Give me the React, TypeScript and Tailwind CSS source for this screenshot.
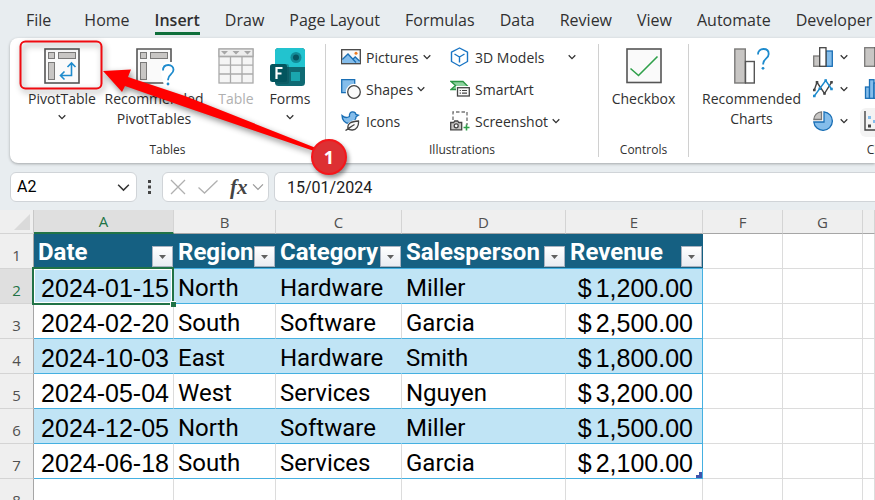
import React from "react";

const tabs = ["File", "Home", "Insert", "Draw", "Page Layout", "Formulas", "Data", "Review", "View", "Automate", "Developer"];

const rows = [
  ["2024-01-15", "North", "Hardware", "Miller", "1,200.00"],
  ["2024-02-20", "South", "Software", "Garcia", "2,500.00"],
  ["2024-10-03", "East", "Hardware", "Smith", "1,800.00"],
  ["2024-05-04", "West", "Services", "Nguyen", "3,200.00"],
  ["2024-12-05", "North", "Software", "Miller", "1,500.00"],
  ["2024-06-18", "South", "Services", "Garcia", "2,100.00"],
];

function Chevron({ size = 8, color = "#333333", width = 1.3 }: { size?: number; color?: string; width?: number }) {
  return (
    <svg width={size} height={size} viewBox="0 0 8 8" fill="none" stroke={color} strokeWidth={width} className="shrink-0">
      <path d="M0.7 2.3 4 5.6 7.3 2.3" />
    </svg>
  );
}

function PivotIcon() {
  return (
    <svg width="36" height="36" viewBox="0 0 36 36" fill="none">
      <rect x="1" y="1" width="34" height="34" fill="#fafafa" stroke="#555" strokeWidth="1.6" />
      <g fill="#c8c6c4" stroke="#7a7978">
        <rect x="4.500" y="4.500" width="6" height="6" />
        <rect x="14.500" y="4.500" width="17" height="6" />
        <rect x="4.500" y="14.500" width="6" height="17" />
      </g>
      <path d="M27.500 15.500V27.500H17M23.500 19l4-4 4 4M20.500 23.500l-4 4 4 4" stroke="#1e8bcd" strokeWidth="1.6" />
    </svg>
  );
}

function RecommendedPivotIcon() {
  return (
    <svg width="36" height="38" viewBox="0 0 36 38" fill="none" className="overflow-visible">
      <rect x="1" y="1" width="34" height="34" fill="#fafafa" />
      <path d="M35 14V1H1v34h27" stroke="#555" strokeWidth="1.6" />
      <g fill="#c8c6c4" stroke="#7a7978">
        <rect x="4.500" y="4.500" width="6" height="6" />
        <rect x="14.500" y="4.500" width="17" height="6" />
        <rect x="4.500" y="14.500" width="6" height="17" />
      </g>
      <path d="M25 25v-5l4-6h8l3 6-4 8-2 10h-6z" fill="#fff" />
      <path d="M27 22.500c0-3.500 2.200-5.500 5.300-5.500s5.200 2 5.200 4.800c0 4.600-5.400 4.700-5.400 9.500v1" stroke="#1e8bcd" strokeWidth="1.8" />
      <circle cx="32" cy="36" r="1.400" fill="#1e8bcd" />
    </svg>
  );
}

function TableIcon() {
  return (
    <svg width="36" height="36" viewBox="0 0 36 36" fill="none" stroke="#aaa" strokeWidth="1.300">
      <rect x="1" y="1" width="34" height="34" fill="#f5f5f5" />
      <rect x="1" y="1" width="34" height="7.500" fill="#ededed" />
      <path d="M1 8.500h34M1 17.200h34M1 26h34M12.500 8.500V35M24 8.500V35" />
      <path d="M3 3h7L6.500 6.500zM14.500 3h7L18 6.500zM26 3h7l-3.500 3.500z" fill="#a6a6a6" stroke="none" />
    </svg>
  );
}

function FormsIcon() {
  return (
    <svg width="40" height="38" viewBox="0 0 40 38">
      <rect x="5" y="0" width="30" height="38" rx="3.500" fill="#0f6a73" />
      <path d="M5 19V3.500A3.500 3.500 0 0 1 8.500 0h23A3.500 3.500 0 0 1 35 3.500V19z" fill="#22c3cf" />
      <circle cx="26" cy="9.500" r="5.500" fill="#128c99" />
      <circle cx="26" cy="9.500" r="3" fill="#075562" />
      <rect x="21" y="24" width="9" height="9" fill="#1aa6ae" />
      <rect x="5" y="16" width="14" height="20" rx="2" fill="#0a4a52" opacity="0.400" />
      <rect x="0" y="16" width="17" height="18" rx="2.500" fill="#03555e" />
      <path d="M6.500 31V20h6M6.500 25.500h5" stroke="#fff" strokeWidth="2.200" fill="none" />
    </svg>
  );
}

function PicturesIcon() {
  return (
    <svg width="20" height="20" viewBox="0 0 20 20" fill="none">
      <rect x="0.700" y="2.700" width="18.600" height="14" fill="#fafafa" stroke="#444" strokeWidth="1.300" />
      <path d="M1.300 12.500 7 7l5 5 2-2 5 4.500v1.600H1.300z" fill="#84bdeb" />
      <path d="M1.300 12.500 7 7l8 8.500M12 12l2.200-2 4.500 4.300" stroke="#1a6fb5" strokeWidth="1.300" />
      <circle cx="15" cy="6.200" r="1.500" fill="#ef7d21" />
    </svg>
  );
}

function ShapesIcon() {
  return (
    <svg width="20" height="20" viewBox="0 0 20 20" fill="none">
      <path d="M0.700 0.700h13v13h-13z" fill="#84bdeb" stroke="#1a6fb5" strokeWidth="1.300" />
      <circle cx="13" cy="13" r="8.200" fill="#fff" />
      <circle cx="13" cy="13" r="6.300" fill="#fafafa" stroke="#444" strokeWidth="1.300" />
    </svg>
  );
}

function IconsIcon() {
  return (
    <svg width="20" height="20" viewBox="0 0 20 20" fill="none">
      <path d="M1 4.500C3 6.500 6 7 8.500 5.500 8 2.500 9.500 .8 11.700 .8c1.800 0 3 1 3.200 2.600l2.500.8-2.300 1.600C15 9 12 12.500 8 12.500 4 12.500 1 9 1 4.500z" fill="#84bdeb" stroke="#1a6fb5" strokeWidth="1.300" />
      <path d="M5 20c-1-6 3-12 15-11.500V20z" fill="#fff" />
      <path d="M7 17.500C6 12.500 10 10.500 17.500 10c.5 5-2 9.300-6.500 9-1.800-.1-3.200-.6-4-1.500zM4.500 19.500C7 18 10 15.500 13.500 13.500" stroke="#444" strokeWidth="1.300" fill="#fafafa" />
    </svg>
  );
}

function CubeIcon() {
  return (
    <svg width="20" height="20" viewBox="0 0 20 20" fill="none" stroke="#1a75c4" strokeWidth="1.400" strokeLinejoin="round">
      <path d="M9.500 1 17.500 5.200v9.300L9.500 19 1.500 14.500V5.200z" fill="#fff" />
      <path d="M4.500 7l5 3 5-3M9.500 10v5.500" />
    </svg>
  );
}

function SmartArtIcon() {
  return (
    <svg width="20" height="20" viewBox="0 0 20 20" fill="none">
      <path d="M1 2.500h12l4.500 4.500L14 10.500H1l4.500-4z" fill="#8fd3a0" stroke="#2a9444" strokeWidth="1.300" />
      <rect x="6" y="7" width="14" height="10.500" fill="#fff" />
      <rect x="7.500" y="8.700" width="11.800" height="8.300" fill="#fafafa" stroke="#444" strokeWidth="1.300" />
      <path d="M9.700 11.500h1.200M12 11.500h5M9.700 14.200h1.200M12 14.200h5" stroke="#444" strokeWidth="1.200" />
    </svg>
  );
}

function ScreenshotIcon() {
  return (
    <svg width="20" height="20" viewBox="0 0 20 20" fill="none">
      <path d="M3 9V1h14v13" stroke="#777" strokeWidth="1.400" strokeDasharray="3.500 2" />
      <path d="M.7 11.500h3l1-1.500h3l1 1.500h3v7.300H.7z" fill="#c8c6c4" stroke="#444" strokeWidth="1.300" />
      <circle cx="6.200" cy="14.800" r="2" fill="#fff" stroke="#444" strokeWidth="1.300" />
      <path d="M16.500 13.500v6M13.500 16.500h6" stroke="#2fa04a" strokeWidth="1.600" />
    </svg>
  );
}

function CheckboxIcon() {
  return (
    <svg width="36" height="36" viewBox="0 0 36 36" fill="none">
      <rect x="1" y="1" width="34" height="33.500" fill="#fafafa" stroke="#555" strokeWidth="1.600" />
      <path d="M4.500 20.500 12.500 27.500 31.500 8.500" stroke="#2fa04a" strokeWidth="1.600" />
    </svg>
  );
}

function RecommendedChartsIcon() {
  return (
    <svg width="36" height="36" viewBox="0 0 36 36" fill="none">
      <rect x="0.800" y="1" width="10.500" height="34" fill="#c8c6c4" stroke="#7a7978" strokeWidth="1.400" />
      <rect x="11.500" y="13.500" width="8.800" height="21.500" fill="#fff" stroke="#555" strokeWidth="1.400" />
      <path d="M24 6.500C24 3 26.300 1 29.500 1s5.200 2 5.200 5c0 4.700-5.500 4.500-5.500 9.500v1" stroke="#1e8bcd" strokeWidth="1.800" />
      <circle cx="29" cy="20.300" r="1.400" fill="#1e8bcd" />
    </svg>
  );
}

function ColumnChartIcon() {
  return (
    <svg width="20" height="20" viewBox="0 0 20 20" strokeWidth="1.300">
      <rect x="0.700" y="9" width="6" height="10.300" fill="#c8c6c4" stroke="#7a7978" />
      <rect x="13" y="4" width="6.300" height="15.300" fill="#84bdeb" stroke="#1a6fb5" />
      <rect x="6.700" y="0.700" width="6.300" height="18.600" fill="#fff" stroke="#444" />
    </svg>
  );
}

function LineChartIcon() {
  return (
    <svg width="20" height="20" viewBox="0 0 20 20" fill="none" strokeWidth="1.400">
      <path d="M1.300 11 4 3.300 11.500 14.500 18.500 3.300" stroke="#444" />
      <path d="M1.300 17 12.700 1.500 18.500 10" stroke="#1e8bcd" />
      <path d="M0 9.700h2.600v2.600H0zM2.700 2h2.600v2.600H2.700zM10.200 13.200h2.600v2.600h-2.600zM17.200 2h2.600v2.600h-2.600z" fill="#444" />
      <path d="M0 15.700h2.600v2.600H0zM11.400 .2H14v2.600h-2.600zM17.200 8.700h2.600v2.600h-2.600zM5.500 8.500h2.600v2.600H5.500z" fill="#1e8bcd" />
    </svg>
  );
}

function PieChartIcon() {
  return (
    <svg width="20" height="20" viewBox="0 0 20 20" strokeWidth="1.300">
      <path d="M8.500.8A8 8 0 0 0 .8 8.500h7.700z" fill="#c8c6c4" stroke="#7a7978" />
      <path d="M11 .8V11H.8A9.300 9.300 0 1 0 11 .8z" fill="#84bdeb" stroke="#1a6fb5" />
    </svg>
  );
}

function HierarchyChartIcon() {
  return (
    <svg width="20" height="20" viewBox="0 0 20 20" strokeWidth="1.300">
      <rect x="0.700" y="0.700" width="10.500" height="18.600" fill="#c8c6c4" stroke="#7a7978" />
      <rect x="11.200" y="0.700" width="8" height="18.600" fill="#fff" stroke="#444" />
    </svg>
  );
}

function HistogramIcon() {
  return (
    <svg width="20" height="20" viewBox="0 0 20 20" strokeWidth="1.300" fill="#84bdeb" stroke="#1a6fb5">
      <rect x="1.500" y="8" width="4" height="11.300" />
      <rect x="5.500" y="0.700" width="4.500" height="18.600" />
      <rect x="10" y="4" width="4.500" height="15.300" />
    </svg>
  );
}

function ScatterIcon() {
  return (
    <svg width="20" height="20" viewBox="0 0 20 20">
      <path d="M1 0v19h19" stroke="#444" strokeWidth="1.400" fill="none" />
      <path d="M4 5h3v3H4zM9 9h3v3H9z" fill="#84bdeb" />
      <path d="M4 13.500h3v3H4zM13 13.500h3v3h-3z" fill="#444" />
    </svg>
  );
}

function Group({ label, className, children }: { label: string; className: string; children: React.ReactNode }) {
  return (
    <section aria-label={label} className={`flex shrink-0 flex-col border-[#d0d0d0] ${className}`}>
      <div className="flex h-[99px] shrink-0">{children}</div>
      <div className="text-center text-[12px] leading-[14px] text-[#303030]">{label}</div>
    </section>
  );
}

function BigButton({ icon, lines, className, chevron, disabled }: { icon: React.ReactNode; lines: string[]; className: string; chevron?: boolean; disabled?: boolean }) {
  return (
    <button disabled={disabled} className={`flex shrink-0 flex-col items-center pt-1 disabled:text-[#b0b0b0] ${className}`}>
      <span className="flex h-[41px] items-start">{icon}</span>
      {lines.map((l) => (
        <span key={l} className="whitespace-nowrap leading-5">{l}</span>
      ))}
      {chevron && <span className="pt-1"><Chevron /></span>}
    </button>
  );
}

function SmallButton({ icon, label, chevron, wide }: { icon: React.ReactNode; label: string; chevron?: boolean; wide?: boolean }) {
  return (
    <button className="flex h-8 items-center gap-1 whitespace-nowrap pb-[6px]">
      {icon}
      <span className="pl-px">{label}</span>
      {chevron && <span className={wide ? "pl-5" : ""}><Chevron /></span>}
    </button>
  );
}

function ChartButton({ label, icon }: { label: string; icon: React.ReactNode }) {
  return (
    <button aria-label={label} className="flex h-8 items-center gap-[7px] pb-[6px]">
      {icon}
      <Chevron />
    </button>
  );
}

function FilterHeader({ label }: { label: string }) {
  return (
    <th scope="col" className="border-b border-[#45b0e1] bg-[#156082] p-0 text-left text-[24px] font-bold text-white">
      <div className="flex h-[34px] items-end pr-px pl-1">
        <span className="w-0 flex-1 whitespace-nowrap leading-8">{label}</span>
        <button aria-label={`Filter ${label}`} className="mb-px flex size-[21px] shrink-0 items-center justify-center border border-[#a9b2c0] bg-linear-to-b from-white to-[#e9ecf2]">
          <svg width="7" height="4" viewBox="0 0 7 4" fill="#606060"><path d="M0 0h7L3.500 4z" /></svg>
        </button>
      </div>
    </th>
  );
}

function RowNumber({ n, active }: { n: number; active?: boolean }) {
  return (
    <th scope="row" className={`h-[35px] border-r border-b border-r-[#a6a6a6] border-b-[#d4d4d4] p-0 pt-2 font-[Open_Sans,sans-serif] text-[15px] font-normal ${active ? "bg-[#dfdfdf] text-[#217346]" : "bg-[#efefef] text-[#505050]"}`}>
      {n}
    </th>
  );
}

function EmptyCells({ count }: { count: number }) {
  return (
    <>
      {Array.from({ length: count }, (_, i) => (
        <td key={i} className="border-r border-b border-[#dcdcdc]" />
      ))}
    </>
  );
}

export default function App() {
  return (
    <div className="relative flex h-screen flex-col overflow-hidden bg-[#e8edf0] font-[Open_Sans,sans-serif] text-[14px] text-[#303030]">
      <nav className="flex h-[38px] shrink-0 gap-[25px] overflow-hidden pl-[26px] text-[16px]">
        {tabs.map((t) => (
          <button key={t} className={`flex h-[35px] shrink-0 flex-col whitespace-nowrap pt-2 leading-6 first:mr-2 ${t === "Insert" ? "border-b-3 border-[#0f703b] font-semibold" : ""}`}>
            {t}
          </button>
        ))}
      </nav>

      <div className="ml-[10px] flex h-[125px] shrink-0 overflow-hidden rounded-l-lg bg-white py-[6px] shadow-[0_1px_3px_rgba(0,0,0,0.3)]">
        <Group label="Tables" className="w-[316px] border-r">
          <div className="flex pl-[10px]">
            <BigButton icon={<PivotIcon />} lines={["PivotTable"]} className="w-[84px]" chevron />
            <BigButton icon={<RecommendedPivotIcon />} lines={["Recommended", "PivotTables"]} className="w-[100px]" />
            <BigButton icon={<TableIcon />} lines={["Table"]} className="w-16" disabled />
            <BigButton icon={<FormsIcon />} lines={["Forms"]} className="w-11" chevron />
          </div>
        </Group>
        <Group label="Illustrations" className="w-[273px] border-r">
          <div className="w-[124px] pl-[15px]">
            <SmallButton icon={<PicturesIcon />} label="Pictures" chevron />
            <SmallButton icon={<ShapesIcon />} label="Shapes" chevron />
            <SmallButton icon={<IconsIcon />} label="Icons" />
          </div>
          <div>
            <SmallButton icon={<CubeIcon />} label="3D Models" chevron wide />
            <SmallButton icon={<SmartArtIcon />} label="SmartArt" />
            <SmallButton icon={<ScreenshotIcon />} label="Screenshot" chevron />
          </div>
        </Group>
        <Group label="Controls" className="w-[90px] border-r">
          <BigButton icon={<CheckboxIcon />} lines={["Checkbox"]} className="w-full" />
        </Group>
        <Group label="Charts" className="w-[392px]">
          <BigButton icon={<RecommendedChartsIcon />} lines={["Recommended", "Charts"]} className="w-[124px] pl-px" />
          <div>
            <ChartButton label="Column chart" icon={<ColumnChartIcon />} />
            <ChartButton label="Line chart" icon={<LineChartIcon />} />
            <ChartButton label="Pie chart" icon={<PieChartIcon />} />
          </div>
          <div className="pl-3">
            <div className="pl-1"><ChartButton label="Hierarchy chart" icon={<HierarchyChartIcon />} /></div>
            <div className="pl-1"><ChartButton label="Statistic chart" icon={<HistogramIcon />} /></div>
            <div className="h-[29px] rounded-md bg-[#f3f3f3] pl-1"><ChartButton label="Scatter chart" icon={<ScatterIcon />} /></div>
          </div>
        </Group>
      </div>

      <div className="flex h-[47px] shrink-0 items-center pt-px pl-[10px]">
        <div className="flex h-[30px] w-[127px] shrink-0 items-center rounded-md border border-[#d0d4d8] bg-white pr-[6px] pl-[6px]">
          <input aria-label="Name box" defaultValue="A2" className="w-0 flex-1 bg-transparent font-[Roboto,sans-serif] text-[16px] text-black outline-none" />
          <button aria-label="Open name list" className="flex"><Chevron size={13} width={0.9} /></button>
        </div>
        <svg width="25" height="14" viewBox="0 0 25 14" fill="#444" className="shrink-0">
          <path d="M11 0h3v3h-3zM11 5.500h3v3h-3zM11 11h3v3h-3z" />
        </svg>
        <div className="flex h-[30px] w-[107px] shrink-0 items-center rounded-md border border-[#d0d4d8] bg-white pl-[7px]">
          <button aria-label="Cancel" className="mr-3 flex">
            <svg width="16" height="16" viewBox="0 0 16 16" stroke="#b0b0b0" strokeWidth="1.300"><path d="M1 1l14 14M15 1 1 15" /></svg>
          </button>
          <button aria-label="Enter" className="mr-3 flex">
            <svg width="20" height="16" viewBox="0 0 20 16" fill="none" stroke="#b0b0b0" strokeWidth="1.300"><path d="M.5 8.500 6.500 14 19.500 1.500" /></svg>
          </button>
          <button className="mr-1 font-[Liberation_Serif,serif] text-[21px] font-bold italic leading-6 text-[#444]">fx</button>
          <button aria-label="More functions" className="flex"><Chevron size={12} color="#999999" width={0.8} /></button>
        </div>
        <input aria-label="Formula bar" defaultValue="15/01/2024" className="ml-[5px] h-[30px] w-0 flex-1 rounded-l-md border border-r-0 border-[#d0d4d8] bg-white pl-3 font-[Roboto,sans-serif] text-[16px] text-[#202020] outline-none" />
      </div>

      <main className="min-h-0 flex-1 overflow-hidden bg-white">
        <table className="w-full min-w-[863px] table-fixed border-separate border-spacing-0 font-[Roboto,sans-serif] text-[24px] text-black">
          <colgroup>
            <col className="w-[34px]" />
            <col className="w-[140px]" />
            <col className="w-[102px]" />
            <col className="w-[126px]" />
            <col className="w-[164px]" />
            <col className="w-[137px]" />
            <col className="w-[80px]" />
            <col className="w-[80px]" />
            <col />
          </colgroup>
          <thead>
            <tr className="h-6 bg-[#efefef] font-[Open_Sans,sans-serif] text-[15px] text-[#505050]">
              <td className="border-r border-b border-r-[#c8c8c8] border-b-[#d4d4d4] p-0">
                <svg width="30" height="16" viewBox="0 0 30 16" fill="#dadada"><path d="M30 0v16H14z" /></svg>
              </td>
              {["A", "B", "C", "D", "E", "F", "G", ""].map((c, i) => (
                <th key={i} scope="col" className={`border-r border-r-[#d4d4d4] p-0 font-normal leading-5 ${c === "A" ? "border-b-2 border-b-[#217346] bg-[#dfdfdf] text-[#217346]" : "border-b border-b-[#a6a6a6]"}`}>
                  {c}
                </th>
              ))}
            </tr>
            <tr>
              <RowNumber n={1} />
              {["Date", "Region", "Category", "Salesperson", "Revenue"].map((h) => (
                <FilterHeader key={h} label={h} />
              ))}
              <EmptyCells count={3} />
            </tr>
          </thead>
          <tbody>
            {rows.map((r, ri) => {
              const striped = ri % 2 === 0;
              const cell = striped ? "border-r border-b-[#45b0e1] border-r-[#c0e4f5] bg-[#c0e4f5]" : "border-r border-b-[#45b0e1] border-r-[#dcdcdc]";
              return (
                <tr key={ri}>
                  <RowNumber n={ri + 2} active={ri === 0} />
                  {r.slice(0, 4).map((v, ci) => (
                    <td key={ci} className={`border-b p-0 pt-1 leading-[30px] ${ci === 0 ? "pr-1 text-right font-[Liberation_Sans,sans-serif] text-[25px]" : "pl-1"} ${ri === 0 && ci === 0 ? "relative z-10" : ""} ${cell}`}>
                      {v}
                      {ri === 0 && ci === 0 && (
                        <span className="pointer-events-none absolute -inset-y-[2px] -right-px -left-[2px] border-2 border-[#217346] shadow-[inset_0_0_0_1px_white]">
                          <span className="absolute -right-[4px] -bottom-[4px] size-[6px] border-t border-l border-white bg-[#217346]" />
                        </span>
                      )}
                    </td>
                  ))}
                  <td className={`relative border-r border-b border-[#45b0e1] p-0 pt-1 pr-[9px] text-right font-[Liberation_Sans,sans-serif] text-[25px] leading-[30px] ${striped ? "bg-[#c0e4f5]" : ""}`}>
                    <span className="mr-1">$</span>{r[4]}
                    {ri === 5 && (
                      <svg width="6" height="6" viewBox="0 0 6 6" fill="#3f54ac" className="absolute right-0 bottom-0"><path d="M0 3h3V0h3v6H0z" /></svg>
                    )}
                  </td>
                  <EmptyCells count={3} />
                </tr>
              );
            })}
            <tr>
              <RowNumber n={8} />
              <EmptyCells count={8} />
            </tr>
          </tbody>
        </table>
      </main>

      <svg width="360" height="190" viewBox="0 0 360 190" className="pointer-events-none absolute top-0 left-0 drop-shadow-[2px_3px_3px_rgba(0,0,0,0.45)]">
        <rect x="20.500" y="41.500" width="81" height="47" rx="5" fill="none" stroke="#f00a10" strokeWidth="2" />
        <path d="M103 71 131 69.500 128 77 185 96 321 150 320 153 185 107 125 86 122 92z" fill="#ff0000" />
      </svg>
      <div className="pointer-events-none absolute top-[139px] left-[311px] flex size-9 items-center justify-center rounded-full border-2 border-[#f5161a] bg-[#dd3033] text-[18px] font-bold text-white shadow-[2px_3px_4px_rgba(0,0,0,0.4)]">
        1
      </div>
    </div>
  );
}
